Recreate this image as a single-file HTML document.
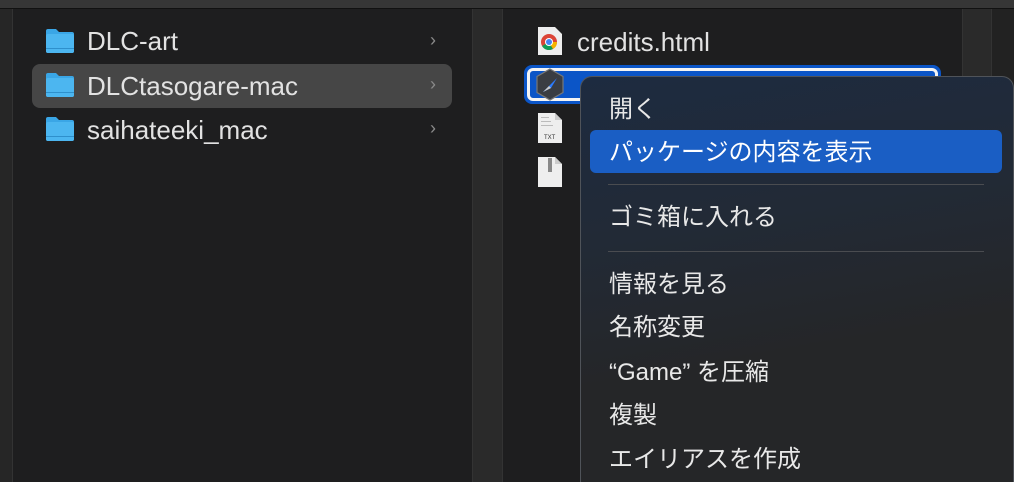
<!DOCTYPE html>
<html style="overflow:hidden;width:1014px;height:482px"><head><meta charset="utf-8"><style>
body{margin:0;width:1014px;height:482px;overflow:hidden;background:#1e1e1f;font-family:"Liberation Sans","Noto Sans CJK JP",sans-serif;position:relative}
.a{position:absolute}
.t{color:#e2e2e2;font-size:26px;line-height:28px;white-space:nowrap}
.chev{color:#8a8a8a;font-size:18px}
.mi{position:absolute;left:609px;color:#e8e8e8;font-size:24px;line-height:28px;white-space:nowrap}
</style></head><body>
<div class="a" style="left:0;top:0;width:1014px;height:8px;background:#363636;border-bottom:1px solid #111"></div>
<div class="a" style="left:0;top:9px;width:12px;height:473px;background:#262626;border-right:1px solid #333"></div>
<div class="a" style="left:472px;top:9px;width:29px;height:473px;background:#2a2a2a;border-left:1px solid #333;border-right:1px solid #333"></div>
<div class="a" style="left:962px;top:9px;width:28px;height:473px;background:#2a2a2a;border-left:1px solid #333;border-right:1px solid #333"></div>
<div class="a" style="left:992px;top:9px;width:22px;height:473px;background:#222"></div>

<div class="a" style="left:32px;top:64px;width:420px;height:44px;background:#464646;border-radius:8px"></div>
<svg class="a" style="left:45px;top:28px" width="30" height="26" viewBox="0 0 30 26"><path d="M1 3q0-2 2-2h8l3 3h13q2 0 2 2v17q0 2-2 2H3q-2 0-2-2z" fill="#3aa6e6"/><rect x="1" y="6" width="28" height="19" rx="2" fill="#4cb6f0"/><rect x="1" y="20" width="28" height="1" fill="#2e90cc"/></svg>
<svg class="a" style="left:45px;top:72px" width="30" height="26" viewBox="0 0 30 26"><path d="M1 3q0-2 2-2h8l3 3h13q2 0 2 2v17q0 2-2 2H3q-2 0-2-2z" fill="#3aa6e6"/><rect x="1" y="6" width="28" height="19" rx="2" fill="#4cb6f0"/><rect x="1" y="20" width="28" height="1" fill="#2e90cc"/></svg>
<svg class="a" style="left:45px;top:116px" width="30" height="26" viewBox="0 0 30 26"><path d="M1 3q0-2 2-2h8l3 3h13q2 0 2 2v17q0 2-2 2H3q-2 0-2-2z" fill="#3aa6e6"/><rect x="1" y="6" width="28" height="19" rx="2" fill="#4cb6f0"/><rect x="1" y="20" width="28" height="1" fill="#2e90cc"/></svg>
<div class="a t" style="left:87px;top:27px">DLC-art</div>
<div class="a t" style="left:87px;top:72px">DLCtasogare-mac</div>
<div class="a t" style="left:87px;top:116px">saihateeki_mac</div>
<div class="a chev" style="left:430px;top:30px">›</div>
<div class="a chev" style="left:430px;top:74px">›</div>
<div class="a chev" style="left:430px;top:118px">›</div>

<svg class="a" style="left:538px;top:27px" width="26" height="28" viewBox="0 0 26 28"><path d="M0 0h17l7 7v21H0z" fill="#eee"/><circle cx="11" cy="15" r="8" fill="#db4437"/><path d="M11 15L4.1 19A8 8 0 0 0 15 22z" fill="#0f9d58"/><path d="M11 15L19 15A8 8 0 0 1 15 22z" fill="#f4b400"/><circle cx="11" cy="15" r="4" fill="#fff"/><circle cx="11" cy="15" r="3" fill="#4285f4"/></svg>
<div class="a t" style="left:577px;top:28px">credits.html</div>

<div class="a" style="left:524px;top:65px;width:417px;height:39px;background:#0b55c7;border-radius:8px"></div>
<div class="a" style="left:527px;top:68px;width:405px;height:27px;border:3px solid #f4f4f4;border-radius:6px;background:#0b55c7"></div>
<svg class="a" style="left:534px;top:68px" width="32" height="34" viewBox="0 0 30 34"><path d="M15 1l13 7.5v16L15 32 2 24.5v-16z" fill="#3a3d42" stroke="#777" stroke-width="1.2"/><path d="M8 24L22 10l-6 10z" fill="#2b7cff"/><path d="M8 24l8-4-2-2z" fill="#ccc"/></svg>
<svg class="a" style="left:538px;top:113px" width="26" height="30" viewBox="0 0 26 30"><path d="M0 0h17l7 7v23H0z" fill="#eee"/><path d="M17 0v7h7" fill="#ccc"/><g fill="#bbb"><rect x="3" y="4" width="8" height="1"/><rect x="3" y="8" width="10" height="1"/><rect x="3" y="12" width="12" height="1"/></g><text x="6" y="26" font-size="6" fill="#333" font-family="Liberation Sans">TXT</text></svg>
<svg class="a" style="left:538px;top:157px" width="26" height="30" viewBox="0 0 26 30"><path d="M0 0h17l7 7v23H0z" fill="#eee"/><path d="M17 0v7h7" fill="#ccc"/><rect x="10" y="1" width="4" height="14" fill="#888"/></svg>

<div class="a" style="left:580px;top:76px;width:432px;height:406px;border:1px solid #4f5359;border-bottom:none;border-radius:12px 12px 0 0;background:linear-gradient(170deg,#1d2b40 0%,#222a36 35%,#252628 65%,#252628 100%)"></div>
<div class="mi" style="top:96px">開く</div>
<div class="a" style="left:590px;top:130px;width:412px;height:43px;background:#1a5ec4;border-radius:6px"></div>
<div class="mi" style="top:139px;color:#fff">パッケージの内容を表示</div>
<div class="a" style="left:608px;top:184px;width:376px;height:1px;background:#4a4c50"></div>
<div class="mi" style="top:204px">ゴミ箱に入れる</div>
<div class="a" style="left:608px;top:251px;width:376px;height:1px;background:#4a4c50"></div>
<div class="mi" style="top:271px">情報を見る</div>
<div class="mi" style="top:314px">名称変更</div>
<div class="mi" style="top:359px">“Game” を圧縮</div>
<div class="mi" style="top:402px">複製</div>
<div class="mi" style="top:446px">エイリアスを作成</div>
</body></html>
